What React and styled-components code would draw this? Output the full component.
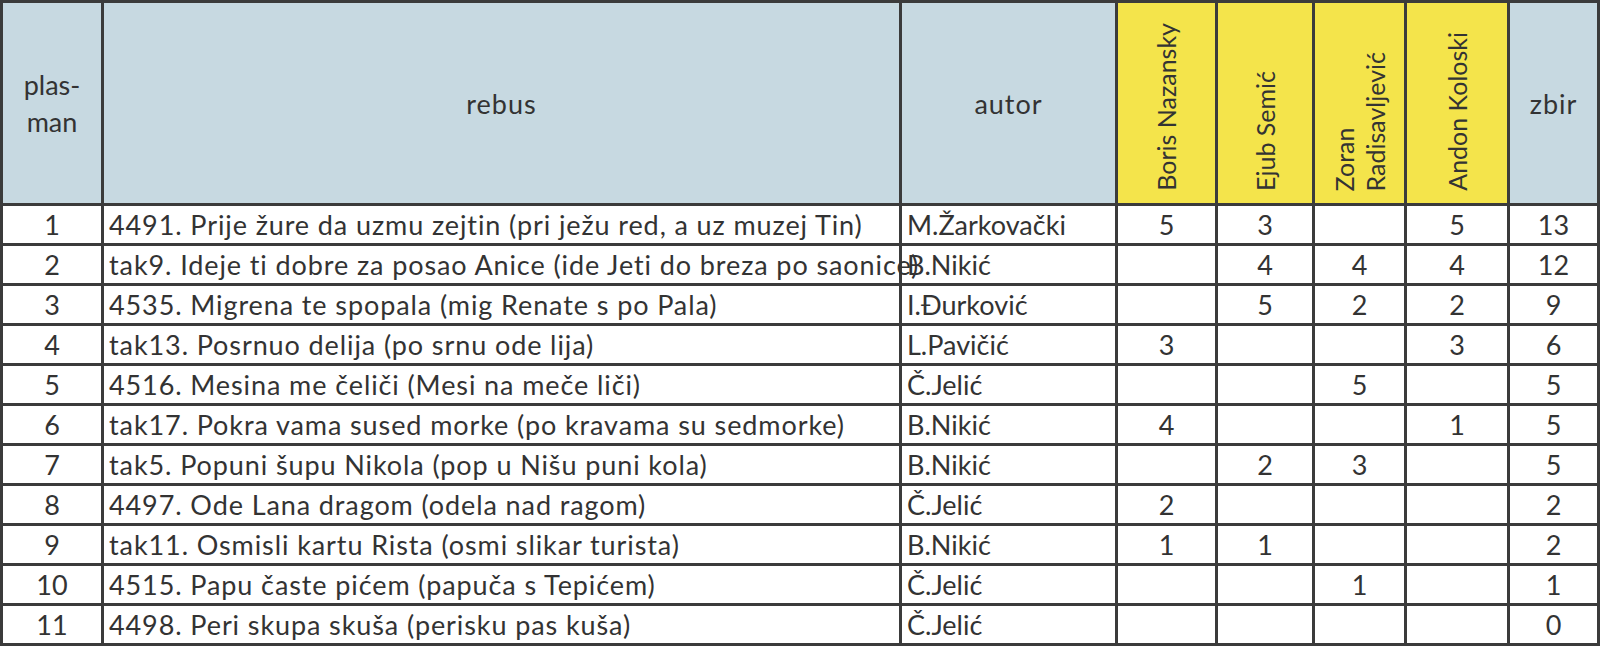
import React from "react";
import styled, { createGlobalStyle } from "styled-components";

const GlobalStyle = createGlobalStyle`
  body {
    margin: 0;
    background: #ffffff;
    font-family: Lato, "Open Sans", sans-serif;
    color: #333333;
  }
`;

const Sheet = styled.div`
  display: grid;
  grid-template-columns: 98px 795px 213px 97px 94px 89px 100px 87px;
  grid-template-rows: 200px repeat(11, 37px);
  gap: 3px;
  padding: 3px;
  width: 1600px;
  box-sizing: border-box;
  background: #3b3b3b;
`;

const HeadCell = styled.div`
  display: flex;
  align-items: ${(p) => (p.$vertical ? "flex-end" : "center")};
  justify-content: center;
  padding-bottom: ${(p) => (p.$vertical ? "12px" : "0")};
  box-sizing: border-box;
  background: ${(p) => (p.$yellow ? "#f4e44b" : "#c7d9e1")};
  font-size: ${(p) => (p.$vertical ? "25px" : "27px")};
  line-height: ${(p) => p.$lineHeight || "31px"};
  letter-spacing: ${(p) => p.$spacing || "0"};
  text-align: center;
`;

const VerticalLabel = styled.span`
  writing-mode: vertical-rl;
  transform: rotate(180deg);
  white-space: nowrap;
  text-align: left;
`;

const Cell = styled.div`
  display: flex;
  align-items: center;
  justify-content: ${(p) => (p.$left ? "flex-start" : "center")};
  padding-left: ${(p) => (p.$left ? "5px" : "0")};
  background: #ffffff;
  font-size: 27px;
  white-space: nowrap;
`;

const RebusCell = styled(Cell)`
  position: relative;
  z-index: 1;
  letter-spacing: 0.9px;
`;

const rows = [
  ["4491. Prije žure da uzmu zejtin (pri ježu red, a uz muzej Tin)", "M.Žarkovački", [5, 3, "", 5], 13],
  ["tak9. Ideje ti dobre za posao Anice (ide Jeti do breza po saonice)", "B.Nikić", ["", 4, 4, 4], 12],
  ["4535. Migrena te spopala (mig Renate s po Pala)", "I.Đurković", ["", 5, 2, 2], 9],
  ["tak13. Posrnuo delija (po srnu ode lija)", "L.Pavičić", [3, "", "", 3], 6],
  ["4516. Mesina me čeliči (Mesi na meče liči)", "Č.Jelić", ["", "", 5, ""], 5],
  ["tak17. Pokra vama sused morke (po kravama su sedmorke)", "B.Nikić", [4, "", "", 1], 5],
  ["tak5. Popuni šupu Nikola (pop u Nišu puni kola)", "B.Nikić", ["", 2, 3, ""], 5],
  ["4497. Ode Lana dragom (odela nad ragom)", "Č.Jelić", [2, "", "", ""], 2],
  ["tak11. Osmisli kartu Rista (osmi slikar turista)", "B.Nikić", [1, 1, "", ""], 2],
  ["4515. Papu časte pićem (papuča s Tepićem)", "Č.Jelić", ["", "", 1, ""], 1],
  ["4498. Peri skupa skuša (perisku pas kuša)", "Č.Jelić", ["", "", "", ""], 0],
];

export default function App() {
  return (
    <>
      <GlobalStyle />
      <Sheet>
        <HeadCell $lineHeight="37px">
          plas-
          <br />
          man
        </HeadCell>
        <HeadCell $spacing="1px">rebus</HeadCell>
        <HeadCell $spacing="1px">autor</HeadCell>
        <HeadCell $yellow $vertical>
          <VerticalLabel>Boris Nazansky</VerticalLabel>
        </HeadCell>
        <HeadCell $yellow $vertical>
          <VerticalLabel>Ejub Semić</VerticalLabel>
        </HeadCell>
        <HeadCell $yellow $vertical>
          <VerticalLabel>
            Zoran
            <br />
            Radisavljević
          </VerticalLabel>
        </HeadCell>
        <HeadCell $yellow $vertical>
          <VerticalLabel>Andon Koloski</VerticalLabel>
        </HeadCell>
        <HeadCell $spacing="1px">zbir</HeadCell>

        {rows.map(([rebus, autor, scores, total], i) => (
          <React.Fragment key={i}>
            <Cell>{i + 1}</Cell>
            <RebusCell $left>{rebus}</RebusCell>
            <Cell $left>{autor}</Cell>
            {scores.map((s, j) => (
              <Cell key={j}>{s}</Cell>
            ))}
            <Cell>{total}</Cell>
          </React.Fragment>
        ))}
      </Sheet>
    </>
  );
}
